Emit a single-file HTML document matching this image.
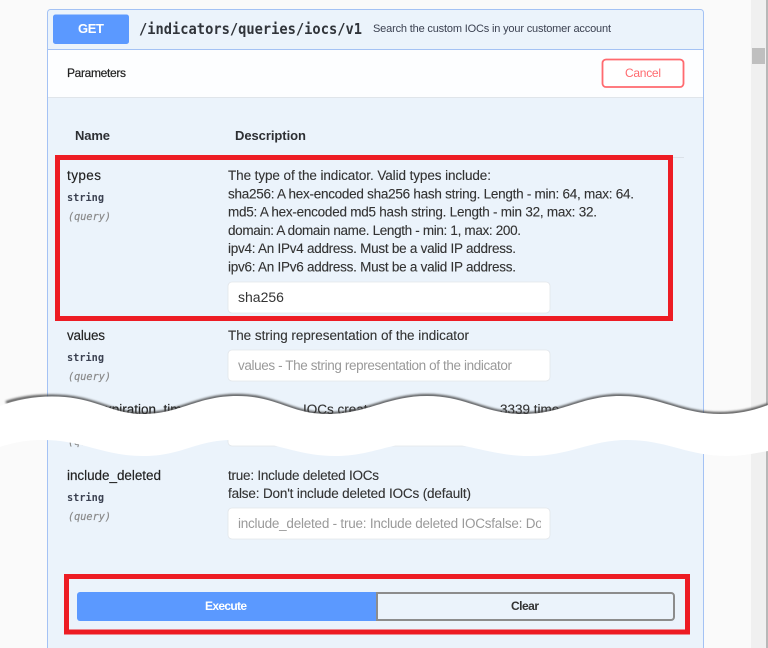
<!DOCTYPE html>
<html lang="en">
<head>
<meta charset="utf-8">
<title>GET /indicators/queries/iocs/v1</title>
<style>
html,body{margin:0;padding:0;background:#fafafa;width:768px;height:648px;overflow:hidden}
svg{display:block;filter:blur(.3px)}
text{font-family:"Liberation Sans",sans-serif;fill:#333}
.d{font-size:13.5px;stroke:#333;stroke-width:.12px}
.n{font-size:13.5px;fill:#222;stroke:#222;stroke-width:.15px}
.m{font-family:"DejaVu Sans Mono","Liberation Mono",monospace;font-weight:bold;font-size:11px;fill:#3b4151}
.q{font-family:"DejaVu Sans Mono","Liberation Mono",monospace;font-style:italic;font-size:10.5px;fill:#8a8a8a;stroke:#8a8a8a;stroke-width:.2px}
.p{font-size:13.5px;fill:#9a9a9a}
.h{font-size:13px;font-weight:bold;fill:#2d2f33}
</style>
</head>
<body>
<svg width="768" height="648" viewBox="0 0 768 648" xmlns="http://www.w3.org/2000/svg">
<defs>
<clipPath id="c1"><rect x="229" y="509" width="312" height="30"/></clipPath>
<filter id="b" x="-2%" y="-50%" width="104%" height="200%"><feGaussianBlur stdDeviation="1"/></filter>
</defs>
<rect width="768" height="648" fill="#fafafa"/>
<rect x="751" y="0" width="15" height="648" fill="#f0f0f0"/>
<rect x="752" y="48" width="13" height="16" fill="#bfbfbf"/>
<rect x="766" y="0" width="2" height="648" fill="#b8b8b8"/>

<rect x="47.500" y="9.500" width="656" height="660" rx="3" fill="#ebf3fb" stroke="#a4c2f4"/>
<rect x="48" y="50" width="655" height="47" fill="#fdfeff"/>
<rect x="48" y="49" width="655" height="1" fill="#a4c2f4"/>
<rect x="48" y="97" width="655" height="1" fill="#e0e5ea"/>

<rect x="53" y="14.500" width="76" height="29.500" rx="2.500" fill="#5b99ff"/>
<text x="78" y="33" font-size="13" font-weight="bold" style="fill:#fff" textLength="26">GET</text>
<text x="139" y="34" style="font-family:'DejaVu Sans Mono','Liberation Mono',monospace;font-weight:bold;font-size:15px;fill:#30343a" textLength="223" lengthAdjust="spacingAndGlyphs">/indicators/queries/iocs/v1</text>
<text x="373" y="32" font-size="11" style="fill:#3b4151" textLength="238">Search the custom IOCs in your customer account</text>

<text x="67" y="77" font-size="12" style="fill:#222;stroke:#222;stroke-width:.2px" textLength="59">Parameters</text>
<rect x="602.500" y="59.500" width="81" height="27.500" rx="3.500" fill="#fff" stroke="#ff6a6f" stroke-width="1.800"/>
<text x="625" y="77" font-size="12" style="fill:#ff6a6f" textLength="36">Cancel</text>

<text x="75" y="140" class="h" textLength="35">Name</text>
<text x="235" y="140" class="h" textLength="71">Description</text>
<rect x="55" y="157" width="629" height="1" fill="#dbe1e8"/>

<text x="67" y="180" class="n" textLength="34">types</text>
<text x="67" y="201" class="m" textLength="37" lengthAdjust="spacingAndGlyphs">string</text>
<text x="68" y="220" class="q" textLength="43" lengthAdjust="spacingAndGlyphs">(query)</text>
<text x="228" y="180" class="d" textLength="263">The type of the indicator. Valid types include:</text>
<text x="228" y="198.500" class="d" textLength="406">sha256: A hex-encoded sha256 hash string. Length - min: 64, max: 64.</text>
<text x="228" y="216.500" class="d" textLength="369">md5: A hex-encoded md5 hash string. Length - min 32, max: 32.</text>
<text x="228" y="235" class="d" textLength="293">domain: A domain name. Length - min: 1, max: 200.</text>
<text x="228" y="253" class="d" textLength="288">ipv4: An IPv4 address. Must be a valid IP address.</text>
<text x="228" y="271.500" class="d" textLength="288">ipv6: An IPv6 address. Must be a valid IP address.</text>
<rect x="228" y="282" width="322" height="31" rx="4" fill="#fff" stroke="#e2e6ea" stroke-width=".8"/>
<text x="238" y="302" font-size="14" style="fill:#333">sha256</text>

<text x="67" y="340" class="n" textLength="38">values</text>
<text x="67" y="361" class="m" textLength="37" lengthAdjust="spacingAndGlyphs">string</text>
<text x="68" y="380" class="q" textLength="43" lengthAdjust="spacingAndGlyphs">(query)</text>
<text x="228" y="340" class="d" textLength="241">The string representation of the indicator</text>
<rect x="228" y="350" width="322" height="31" rx="4" fill="#fff" stroke="#e2e6ea" stroke-width=".8"/>
<text x="238" y="370" class="p" textLength="274">values - The string representation of the indicator</text>

<text x="63" y="414" class="n">from_expiration_timestamp</text>
<text x="303" y="414" class="d">IOCs created</text>
<text x="500" y="414" class="d">3339 time</text>
<text x="68" y="445" class="q" textLength="43" lengthAdjust="spacingAndGlyphs">(query)</text>
<rect x="228" y="415" width="322" height="31" rx="4" fill="#fff" stroke="#e2e6ea" stroke-width=".8"/>

<text x="67" y="480" class="n" textLength="94">include_deleted</text>
<text x="67" y="501" class="m" textLength="37" lengthAdjust="spacingAndGlyphs">string</text>
<text x="68" y="520" class="q" textLength="43" lengthAdjust="spacingAndGlyphs">(query)</text>
<text x="228" y="480" class="d" textLength="151">true: Include deleted IOCs</text>
<text x="228" y="498" class="d" textLength="243">false: Don't include deleted IOCs (default)</text>
<rect x="228" y="508" width="322" height="31" rx="4" fill="#fff" stroke="#e2e6ea" stroke-width=".8"/>
<g clip-path="url(#c1)"><text x="238" y="528" class="p" textLength="312">include_deleted - true: Include deleted IOCsfalse: Don</text></g>

<path d="M77 595a3 3 0 0 1 3-3H377V621H80a3 3 0 0 1-3-3Z" fill="#5b99ff"/>
<text x="205" y="610" font-size="12" font-weight="bold" style="fill:#fff" textLength="42">Execute</text>
<path d="M377 593H671a3 3 0 0 1 3 3V617a3 3 0 0 1-3 3H377Z" fill="#ebf3fb" stroke="#8c8c8c" stroke-width="2"/>
<text x="511" y="610" font-size="12" font-weight="bold" style="fill:#333" textLength="28">Clear</text>

<rect x="57.500" y="157.500" width="613" height="161" fill="none" stroke="#ed1c24" stroke-width="5"/>
<rect x="66.500" y="576.500" width="621" height="55.500" fill="none" stroke="#ed1c24" stroke-width="5"/>

<path d="M6 403C18 399 34 396.500 52 396.500C95 396.500 110 414 143 414C180 414 197 396 237 396C277 396 290 414 327 414C367 414 387 396 427 396C467 396 483 414 523 414C563 414 580 396 620 396C660 396 680 414 720 414C740 414 755 410 768 405" fill="none" stroke="#3a3a3a" stroke-width="3" filter="url(#b)" opacity=".85" transform="translate(0 -.5)"/>
<path d="M0 406C15 400 34 396.500 52 396.500C95 396.500 110 414 143 414C180 414 197 396 237 396C277 396 290 414 327 414C367 414 387 396 427 396C467 396 483 414 523 414C563 414 580 396 620 396C660 396 680 414 720 414C740 414 755 410 768 405V451C752 454 740 456 727 456C687 456 667 440 627 440C590 440 570 456 530 456C490 456 467 442 427 442C390 442 372 456 335 456C295 456 273 440 233 440C195 440 183 456 143 456C103 456 83 440 43 440C25 440 12 443 0 447Z" fill="#fff"/>
</svg>
</body>
</html>
